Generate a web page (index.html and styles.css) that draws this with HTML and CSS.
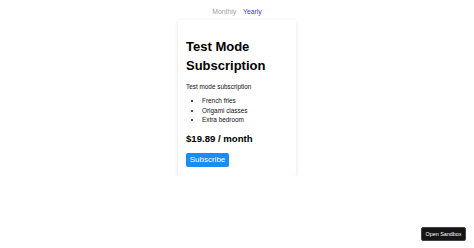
FILE: index.html
```html
<!DOCTYPE html>
<html>
<head>
<meta charset="utf-8">
<link rel="stylesheet" href="styles.css">
</head>
<body>
<div class="page">
  <div class="toggle">
    <span class="opt">Monthly</span>
    <span class="opt active">Yearly</span>
  </div>
  <div class="card">
    <h1 class="title">Test Mode Subscription</h1>
    <p class="desc">Test mode subscription</p>
    <ul class="features">
      <li>French fries</li>
      <li>Origami classes</li>
      <li>Extra bedroom</li>
    </ul>
    <div class="price">$19.89 / month</div>
    <button class="subscribe">Subscribe</button>
  </div>
</div>
<button class="sandbox">Open Sandbox</button>
</body>
</html>
```
FILE: styles.css
```css
html, body {
  margin: 0;
  padding: 0;
  background: #ffffff;
  font-family: "Liberation Sans", Arial, sans-serif;
  color: #111;
}
.page {
  display: flex;
  flex-direction: column;
  align-items: center;
  padding-top: 8px;
}
.toggle {
  display: flex;
  gap: 7px;
  font-size: 6.8px;
  line-height: 8px;
}
.opt {
  color: #a0a0a0;
}
.opt.active {
  color: #3a3ae0;
  font-weight: 500;
}
.card {
  margin-top: 4px;
  width: 118px;
  box-sizing: border-box;
  padding: 17px 8px 9px 8px;
  background: #fff;
  box-shadow: 0 1px 4px rgba(0,0,0,0.12);
  border-radius: 2px;
  display: flex;
  flex-direction: column;
  align-items: flex-start;
}
.title {
  margin: 0;
  font-size: 13px;
  line-height: 19px;
  font-weight: bold;
  color: #000;
}
.desc {
  margin: 6.5px 0 0 0;
  font-size: 6.4px;
  line-height: 9px;
}
.features {
  margin: 5.5px 0 0 0;
  padding-left: 16px;
  font-size: 6.4px;
  line-height: 9.5px;
}
.price {
  margin-top: 8.5px;
  font-size: 9.6px;
  line-height: 12px;
  font-weight: bold;
  color: #000;
}
.subscribe {
  margin-top: 8px;
  height: 14px;
  width: 43px;
  padding: 0;
  border: none;
  border-radius: 2px;
  background: #1a8cf5;
  color: #fff;
  font-family: "Liberation Sans", Arial, sans-serif;
  font-size: 8px;
  line-height: 14px;
}
.sandbox {
  position: fixed;
  right: 8px;
  bottom: 7px;
  width: 45px;
  height: 14px;
  padding: 0;
  background: #151515;
  color: #fff;
  border: 1px solid #444;
  border-radius: 2px;
  font-family: "Liberation Sans", Arial, sans-serif;
  font-size: 5.4px;
  line-height: 12px;
}
```
